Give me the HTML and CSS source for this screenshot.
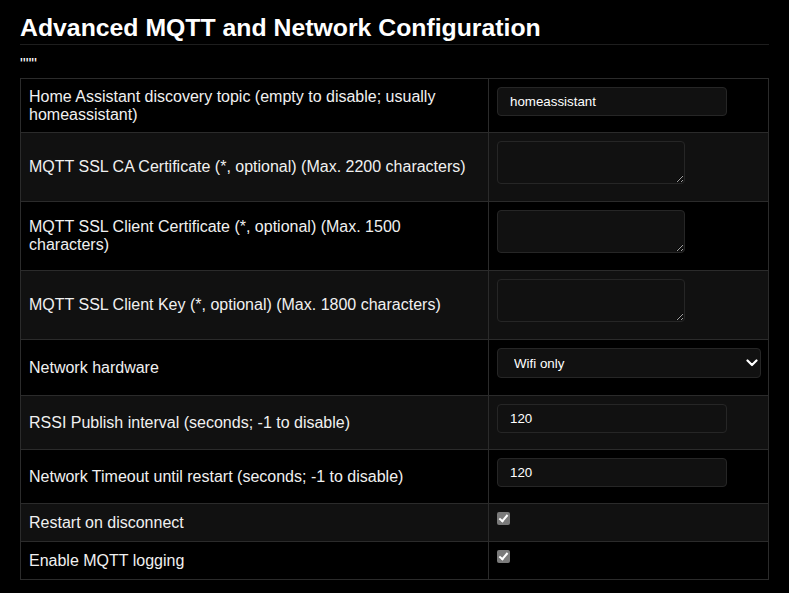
FILE: index.html
```html
<!DOCTYPE html>
<html lang="en">
  <head>
    <meta charset="UTF-8" />
    <meta name="viewport" content="width=device-width, initial-scale=1.0" />
    <title>Advanced MQTT and Network Configuration</title>
    <link rel="stylesheet" href="styles.css">
  </head>
  <body>
    <h2 class="page-title">Advanced MQTT and Network Configuration</h2>
    <div class="quotes">"""</div>

    <table class="config-table">
      <tr>
        <td class="label">Home Assistant discovery topic (empty to disable; usually homeassistant)</td>
        <td class="value"><input type="text" class="field" value="homeassistant" /></td>
      </tr>
      <tr>
        <td class="label">MQTT SSL CA Certificate (*, optional) (Max. 2200 characters)</td>
        <td class="value"><textarea class="area"></textarea></td>
      </tr>
      <tr>
        <td class="label">MQTT SSL Client Certificate (*, optional) (Max. 1500 characters)</td>
        <td class="value"><textarea class="area"></textarea></td>
      </tr>
      <tr>
        <td class="label">MQTT SSL Client Key (*, optional) (Max. 1800 characters)</td>
        <td class="value"><textarea class="area"></textarea></td>
      </tr>
      <tr>
        <td class="label">Network hardware</td>
        <td class="value">
          <div class="select-wrap">
            <select class="dropdown">
              <option>Wifi only</option>
              <option>Ethernet</option>
            </select>
            <svg class="chevron" width="12" height="8" viewBox="0 0 12 8">
              <path d="M1.5 1.5 L6 6 L10.5 1.5" fill="none" stroke="#fff" stroke-width="2.2" stroke-linecap="round" stroke-linejoin="round" />
            </svg>
          </div>
        </td>
      </tr>
      <tr>
        <td class="label">RSSI Publish interval (seconds; -1 to disable)</td>
        <td class="value"><input type="text" class="field" value="120" /></td>
      </tr>
      <tr>
        <td class="label">Network Timeout until restart (seconds; -1 to disable)</td>
        <td class="value"><input type="text" class="field" value="120" /></td>
      </tr>
      <tr>
        <td class="label">Restart on disconnect</td>
        <td class="value"><input type="checkbox" class="check" checked /></td>
      </tr>
      <tr>
        <td class="label">Enable MQTT logging</td>
        <td class="value"><input type="checkbox" class="check" checked /></td>
      </tr>
    </table>
  </body>
</html>
```

FILE: styles.css
```css
body {
  font-family: "Liberation Sans", Arial, sans-serif;
  background-color: #000;
  color: #eee;
  margin: 0;
  padding: 0 20px;
}

.page-title {
  margin: 14px 0 0;
  padding-bottom: 2px;
  font-size: 24.8px;
  line-height: 28px;
  font-weight: bold;
  color: #fff;
  border-bottom: 1px solid #1e1e1e;
}

.quotes {
  margin: 11px 0 4px;
  font-size: 16px;
  color: #fff;
}

.config-table {
  width: 100%;
  table-layout: fixed;
  border-collapse: collapse;
  border: 1px solid #2b2b2b;
}

.config-table tr:nth-child(even) {
  background-color: #111;
}

.config-table td {
  border: 1px solid #2b2b2b;
  padding: 8px;
  font-size: 16px;
  vertical-align: middle;
}

.config-table td.label {
  width: 451px;
  color: #f0f0f0;
}

.field,
.area,
.dropdown {
  display: block;
  box-sizing: border-box;
  margin: 0 0 8px;
  background-color: #111;
  color: #fff;
  border: 1px solid #262626;
  border-radius: 4px;
  font-family: "Liberation Sans", Arial, sans-serif;
  font-size: 13.333px;
  outline: none;
}

.field {
  width: 230px;
  height: 29px;
  padding: 0 12px;
}

.area {
  width: 188px;
  height: 43px;
  margin-bottom: 9px;
  resize: both;
  color-scheme: dark;
}

.select-wrap {
  position: relative;
  width: 264px;
}

.dropdown {
  width: 264px;
  height: 30px;
  margin-bottom: 9px;
  padding: 0 16px;
  appearance: none;
  -webkit-appearance: none;
}

.chevron {
  position: absolute;
  right: 3px;
  top: 11px;
  pointer-events: none;
}

.check {
  display: block;
  appearance: none;
  -webkit-appearance: none;
  position: relative;
  width: 13px;
  height: 13px;
  margin: 0 0 8px;
  border-radius: 2px;
  background-color: #7a7a7a;
}

.check:checked::after {
  content: "";
  position: absolute;
  left: 4px;
  top: 1px;
  width: 3px;
  height: 7px;
  border: solid #fff;
  border-width: 0 2px 2px 0;
  transform: rotate(40deg);
}
```
